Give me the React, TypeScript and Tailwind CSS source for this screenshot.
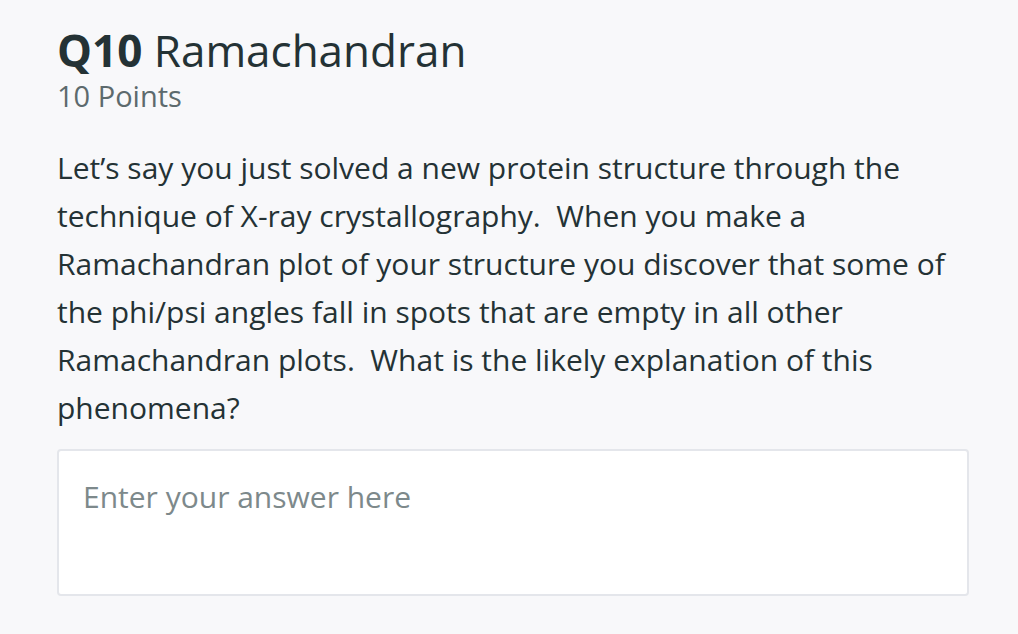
export default function App() {
  const lines = [
    'Let\u2019s say you just solved a new protein structure through the',
    'technique of X-ray crystallography.\u00a0 When you make a',
    'Ramachandran plot of your structure you discover that some of',
    'the phi/psi angles fall in spots that are empty in all other',
    'Ramachandran plots.\u00a0 What is the likely explanation of this',
    'phenomena?',
  ];

  return (
    <div
      className="min-h-screen bg-[#f8f8fa] text-[#243235]"
      style={{ fontFamily: '"Open Sans", Lato, sans-serif' }}
    >
      <div className="w-[912px] pl-[57px] pt-[25px] box-content">
        <h2 className="text-[44px] leading-[50px]">
          <span className="font-bold">Q10</span> Ramachandran
        </h2>
        <div className="mt-[4px] text-[29px] leading-[34px] text-[#5d6a6d]">10 Points</div>

        <p className="mt-[31px] text-[30px] leading-[48px]">
          {lines.map((l, i) => (
            <span key={i} className="block">
              {l}
            </span>
          ))}
        </p>

        <div className="mt-[17px] h-[147px] rounded-[4px] border-2 border-[#e4e6eb] bg-white px-[24px] pt-[29px]">
          <div className="text-[30px] leading-[34px] text-[#7d898b]">Enter your answer here</div>
        </div>
      </div>
    </div>
  );
}
